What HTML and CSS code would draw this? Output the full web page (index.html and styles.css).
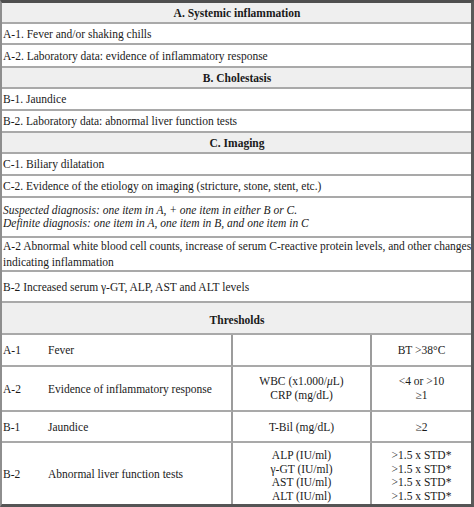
FILE: index.html
```html
<!DOCTYPE html>
<html>
<head>
<meta charset="utf-8">
<link rel="stylesheet" href="styles.css">
</head>
<body>
<div class="frame">
<table class="crit">
  <colgroup>
    <col class="c-code"><col class="c-name"><col class="c-unit"><col class="c-val">
  </colgroup>
  <tbody>
    <tr class="r21 head"><td colspan="4">A. Systemic inflammation</td></tr>
    <tr class="r21"><td colspan="4">A-1. Fever and/or shaking chills</td></tr>
    <tr class="r23"><td colspan="4">A-2. Laboratory data: evidence of inflammatory response</td></tr>
    <tr class="r21 head"><td colspan="4">B. Cholestasis</td></tr>
    <tr class="r22"><td colspan="4">B-1. Jaundice</td></tr>
    <tr class="r22"><td colspan="4">B-2. Laboratory data: abnormal liver function tests</td></tr>
    <tr class="r21 head"><td colspan="4">C. Imaging</td></tr>
    <tr class="r22"><td colspan="4">C-1. Biliary dilatation</td></tr>
    <tr class="r22"><td colspan="4">C-2. Evidence of the etiology on imaging (stricture, stone, stent, etc.)</td></tr>
    <tr class="r40"><td colspan="4" class="ital">Suspected diagnosis: one item in A, + one item in either B or C.<br>Definite diagnosis: one item in A, one item in B, and one item in C</td></tr>
    <tr class="r34"><td colspan="4" class="multi">A-2 Abnormal white blood cell counts, increase of serum C-reactive protein levels, and other changes<br>indicating inflammation</td></tr>
    <tr class="r31"><td colspan="4">B-2 Increased serum γ-GT, ALP, AST and ALT levels</td></tr>
    <tr class="r32 head"><td colspan="4" class="thr">Thresholds</td></tr>
    <tr class="r32">
      <td>A-1</td><td class="vline">Fever</td><td class="ctr vline"></td><td class="ctr">BT &gt;38°C</td>
    </tr>
    <tr class="r45">
      <td>A-2</td><td class="vline">Evidence of inflammatory response</td>
      <td class="ctr vline stack">WBC (x1.000/<i>μ</i>L)<br>CRP (mg/dL)</td>
      <td class="ctr stack">&lt;4 or &gt;10<br>≥1</td>
    </tr>
    <tr class="r31">
      <td>B-1</td><td class="vline">Jaundice</td><td class="ctr vline">T-Bil (mg/dL)</td><td class="ctr">≥2</td>
    </tr>
    <tr class="r61 last">
      <td>B-2</td><td class="vline">Abnormal liver function tests</td>
      <td class="ctr vline stack low">ALP (IU/ml)<br>γ-GT (IU/ml)<br>AST (IU/ml)<br>ALT (IU/ml)</td>
      <td class="ctr stack low">&gt;1.5 x STD*<br>&gt;1.5 x STD*<br>&gt;1.5 x STD*<br>&gt;1.5 x STD*</td>
    </tr>
  </tbody>
</table>
</div>
</body>
</html>
```

FILE: styles.css
```css
html, body {
  margin: 0;
  padding: 0;
  background: #ffffff;
  font-family: "Liberation Serif", "Times New Roman", serif;
}
.frame {
  width: 474px;
  height: 507px;
  box-sizing: border-box;
  border-top: 3px solid #4f4f4f;
  border-left: 2px solid #8e8e8e;
  border-right: 3px solid #5a5a5a;
  border-bottom: 3px solid #555555;
  overflow: hidden;
}
.crit {
  width: 100%;
  border-collapse: separate;
  border-spacing: 0;
  table-layout: fixed;
  font-family: "Liberation Serif", "Times New Roman", serif;
  font-size: 11.5px;
  color: #1a1a1a;
}
.c-code { width: 45px; }
.c-name { width: 186px; }
.c-unit { width: 139px; }
.c-val { width: auto; }
.crit td {
  padding: 0 0 0 1px;
  border-bottom: 2px solid #a9a9a9;
  vertical-align: middle;
  line-height: 14px;
  white-space: nowrap;
  overflow: visible;
}
.crit td.multi { line-height: 16px; }
.crit td.ital { font-style: italic; line-height: 13px; }
.crit tr.last td { border-bottom: none; }
.head td {
  background: #efefef;
  font-weight: bold;
  text-align: center;
}
.crit td.thr { padding-top: 4px; }
.crit td.ctr { text-align: center; padding: 0; }
.crit td.vline { border-right: 2px solid #9c9c9c; }
.crit td.stack { line-height: 13.5px; }
.crit td.low { padding-top: 5px; }
.r21 { height: 21px; }
.r22 { height: 22px; }
.r23 { height: 23px; }
.r31 { height: 31px; }
.r32 { height: 32px; }
.r34 { height: 34px; }
.r40 { height: 40px; }
.r45 { height: 45px; }
.r61 { height: 61px; }
```
